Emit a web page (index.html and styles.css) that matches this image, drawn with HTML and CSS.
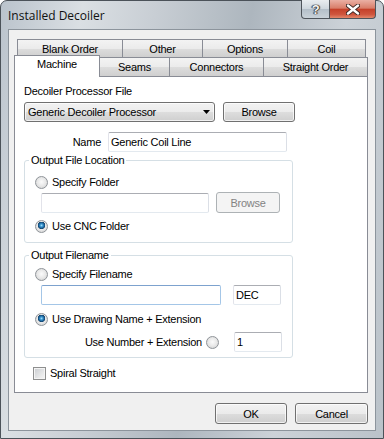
FILE: index.html
```html
<!DOCTYPE html>
<html lang="en">
<head>
    <meta charset="UTF-8">
    <title>Installed Decoiler</title>
    <link rel="stylesheet" href="styles.css">
</head>
<body>
    <div class="window">
        <div class="titlebar">
            <span class="title">Installed Decoiler</span>
            <div class="caption-buttons">
                <span class="cap-btn help">?</span>
                <span class="cap-btn close">
                    <svg width="14" height="11" viewBox="0 0 14 11">
                        <path d="M2 1.5 L12 9.5 M12 1.5 L2 9.5" stroke="#3a2622" stroke-width="4.2" stroke-linecap="round"/>
                        <path d="M2 1.5 L12 9.5 M12 1.5 L2 9.5" stroke="#ffffff" stroke-width="2.4" stroke-linecap="round"/>
                    </svg>
                </span>
            </div>
        </div>

        <div class="client">
            <div class="tabs">
                <div class="tab-row back">
                    <div class="tab t-blank">Blank Order</div>
                    <div class="tab t-other">Other</div>
                    <div class="tab t-options">Options</div>
                    <div class="tab t-coil">Coil</div>
                </div>
                <div class="tab-row front">
                    <div class="tab selected t-machine">Machine</div>
                    <div class="tab t-seams">Seams</div>
                    <div class="tab t-connectors">Connectors</div>
                    <div class="tab t-straight">Straight Order</div>
                </div>

                <div class="tab-panel">
                    <div class="field-label">Decoiler Processor File</div>
                    <div class="row processor-row">
                        <div class="combo">
                            <span>Generic Decoiler Processor</span>
                            <svg class="combo-arrow" width="7" height="4" viewBox="0 0 7 4"><polygon points="0,0 7,0 3.5,4" fill="#000"/></svg>
                        </div>
                        <button class="btn browse">Browse</button>
                    </div>

                    <div class="row name-row">
                        <label class="name-label" for="name">Name</label>
                        <input class="textbox name-box" id="name" type="text" value="Generic Coil Line">
                    </div>

                    <fieldset class="group location">
                        <legend>Output File Location</legend>
                        <label class="radio-line"><input type="radio" name="location"> Specify Folder</label>
                        <div class="row indent">
                            <input class="textbox folder-box" type="text">
                            <button class="btn folder-browse" disabled>Browse</button>
                        </div>
                        <label class="radio-line cnc"><input type="radio" name="location" checked> Use CNC Folder</label>
                    </fieldset>

                    <fieldset class="group filename">
                        <legend>Output Filename</legend>
                        <label class="radio-line"><input type="radio" name="filename"> Specify Filename</label>
                        <div class="row indent file-row">
                            <input class="textbox file-box hot" type="text">
                            <input class="textbox ext-box" type="text" value="DEC">
                        </div>
                        <label class="radio-line drawing"><input type="radio" name="filename" checked> Use Drawing Name + Extension</label>
                        <div class="row number-row">
                            <label class="number-label">Use Number + Extension</label>
                            <input type="radio" name="number">
                            <input class="textbox ext-box number-box" type="text" value="1">
                        </div>
                    </fieldset>

                    <label class="check-line"><input type="checkbox"> Spiral Straight</label>
                </div>
            </div>

            <div class="dialog-buttons">
                <button class="btn ok">OK</button>
                <button class="btn cancel">Cancel</button>
            </div>
        </div>
    </div>
</body>
</html>
```

FILE: styles.css
```css
body {
    margin: 0;
    font-family: "Liberation Sans", Arial, sans-serif;
    font-size: 11px;
    letter-spacing: -0.25px;
    color: #000;
    background: #fff;
}
.window {
    width: 384px;
    height: 439px;
    box-sizing: border-box;
    border: 1px solid #4b5259;
    border-radius: 7px 7px 0 0;
    background: linear-gradient(100deg, #bac3cc 0%, #dadfe3 18%, #c8ced4 34%, #adb6be 55%, #ccd2d8 76%, #bac2c9 100%);
    display: flex;
    flex-direction: column;
}
.titlebar {
    height: 28px;
    display: flex;
    align-items: flex-start;
    padding-left: 7px;
    padding-right: 7px;
}
.title {
    font-family: "Open Sans", "Liberation Sans", sans-serif;
    font-size: 12px;
    letter-spacing: 0;
    color: #111;
    align-self: center;
    margin-top: 1px;
}
.caption-buttons {
    margin-left: auto;
    margin-top: -1px;
    display: flex;
}
.cap-btn {
    height: 19px;
    box-sizing: border-box;
    border: 1px solid #4e545b;
    border-top: none;
    display: flex;
    align-items: center;
    justify-content: center;
}
.help {
    width: 29px;
    border-radius: 0 0 0 4px;
    background: linear-gradient(#e9edf0 0%, #cfd7de 48%, #b4bfc9 52%, #c9d2d9 100%);
    font-family: "Liberation Sans", sans-serif;
    font-weight: bold;
    font-size: 13px;
    color: #f4f4f4;
    text-shadow: 0 0 1px #333, 0 0 1px #333, 1px 0 1px #333, -1px 0 1px #333;
}
.close {
    width: 46px;
    border-left: none;
    border-radius: 0 0 4px 0;
    background: linear-gradient(#eab0a4 0%, #d97e6a 45%, #c5412a 52%, #cf553d 80%, #e2876b 100%);
}
.client {
    flex: 1;
    margin: 0 7px 7px 7px;
    border: 1px solid #8c949c;
    background: #f0f0f0;
    padding: 9px 0 0 5px;
}

/* tabs */
.tabs {
    width: 354px;
}
.tab-row {
    display: flex;
}
.tab-row.back {
    margin-left: 3px;
    height: 18px;
}
.tab-row.front {
    margin-top: -2px;
    height: 21px;
    align-items: flex-start;
}
.tab {
    box-sizing: border-box;
    border: 1px solid #898c95;
    border-bottom: none;
    background: linear-gradient(#f3f3f3 0%, #ebebeb 50%, #dddddd 51%, #cfcfcf 100%);
    text-align: center;
    margin-left: -1px;
}
.tab:first-child {
    margin-left: 0;
}
.back .tab {
    height: 18px;
    line-height: 18px;
}
.front .tab {
    height: 19px;
    margin-top: 2px;
    line-height: 19px;
}
.front .tab.selected {
    height: 22px;
    margin-top: 0;
    line-height: 17px;
    background: #fff;
    position: relative;
    z-index: 1;
}
.t-blank { width: 106px; }
.t-other { width: 81px; }
.t-options { width: 86px; }
.t-coil { width: 79px; }
.t-machine { width: 86px; }
.t-seams { width: 71px; }
.t-connectors { width: 95px; }
.t-straight { width: 105px; }

.tab-panel {
    height: 317px;
    box-sizing: border-box;
    border: 1px solid #898c95;
    background: #fff;
    padding: 8px 0 0 9px;
}
.row {
    display: flex;
    align-items: center;
}
.field-label {
    line-height: 13px;
}
.processor-row {
    margin-top: 3px;
}

/* controls */
.combo, .btn {
    box-sizing: border-box;
    height: 20px;
    border: 1px solid #707070;
    border-radius: 3px;
    background: linear-gradient(#f2f2f2 0%, #ebebeb 50%, #dddddd 51%, #cfcfcf 100%);
    box-shadow: inset 0 0 0 1px rgba(255, 255, 255, 0.7);
    font-family: inherit;
    font-size: 11px;
    letter-spacing: inherit;
    color: #000;
    padding: 0;
}
.combo {
    width: 191px;
    display: flex;
    align-items: center;
    padding-left: 3px;
}
.combo-arrow {
    margin-left: auto;
    margin-right: 4px;
}
.browse {
    width: 72px;
    margin-left: 8px;
    margin-top: 1px;
}
.btn:disabled {
    border-color: #adb2b5;
    background: #f4f4f4;
    box-shadow: none;
    color: #838383;
}
.textbox {
    box-sizing: border-box;
    height: 20px;
    border: 1px solid;
    border-color: #abadb3 #dbdfe6 #e3e9ef #e2e3ea;
    border-radius: 2px;
    background: #fff;
    font-family: inherit;
    font-size: 11px;
    letter-spacing: inherit;
    color: #000;
    padding: 0 2px;
    margin: 0;
    outline: none;
}
.textbox.hot {
    border-color: #7da2ce #a4c6e7 #a4c6e7 #a4c6e7;
}
.name-row {
    margin-top: 10px;
}
.name-label {
    width: 77px;
    text-align: right;
    margin-right: 7px;
}
.name-box {
    width: 179px;
}

/* group boxes */
.group {
    width: 269px;
    box-sizing: border-box;
    margin: 0;
    border: 1px solid #d5dfe5;
    border-radius: 3px;
    padding: 0 0 0 10px;
}
.group legend {
    line-height: 13px;
    padding: 0 2px;
    margin-left: -6px;
}
.location {
    margin-top: 2px;
    padding-top: 9px;
    padding-bottom: 9px;
}
.filename {
    margin-top: 6px;
    padding-top: 6px;
    padding-bottom: 5px;
}
.radio-line, .check-line {
    display: flex;
    align-items: center;
    height: 13px;
    line-height: 13px;
}
input[type="radio"] {
    appearance: none;
    width: 13px;
    height: 13px;
    box-sizing: border-box;
    margin: 0 4px 0 0;
    border: 1px solid #8f9499;
    border-radius: 50%;
    background: radial-gradient(circle at 50% 45%, #fbfbfb 0, #e8e8e8 50%, #cbcbcb 100%);
    flex: none;
}
input[type="radio"]:checked {
    background:
        radial-gradient(circle at 50% 40%, #a6e1fb 0, #3c97d1 1.4px, #185c92 2.8px, #123f66 3.5px, transparent 3.9px),
        radial-gradient(circle at 50% 45%, #fbfbfb 0, #e8e8e8 50%, #cbcbcb 100%);
}
input[type="checkbox"] {
    appearance: none;
    width: 13px;
    height: 13px;
    box-sizing: border-box;
    margin: 0 4px 0 9px;
    border: 1px solid #8e8f8f;
    background: linear-gradient(135deg, #c9ccd0 0%, #e6e7e8 60%, #f6f6f6 100%);
    box-shadow: inset 0 0 0 1px #f4f4f4;
    flex: none;
}
.indent {
    margin-left: 6px;
    margin-top: 3px;
}
.folder-box {
    width: 168px;
}
.folder-browse {
    width: 64px;
    height: 21px;
    margin-left: 7px;
}
.cnc {
    margin-top: 7px;
}
.file-row {
    margin-top: 4px;
}
.file-box {
    width: 180px;
}
.ext-box {
    width: 48px;
    margin-left: 12px;
}
.drawing {
    margin-top: 8px;
}
.number-row {
    margin-top: 6px;
}
.number-label {
    width: 167px;
    text-align: right;
    margin-right: 4px;
}
.number-box {
    margin-left: 11px;
}
.check-line {
    margin-top: 9px;
}

/* dialog buttons */
.dialog-buttons {
    width: 354px;
    display: flex;
    justify-content: flex-end;
    margin-top: 10px;
}
.ok {
    width: 72px;
    height: 21px;
}
.cancel {
    width: 73px;
    height: 21px;
    margin-left: 8px;
}
```
